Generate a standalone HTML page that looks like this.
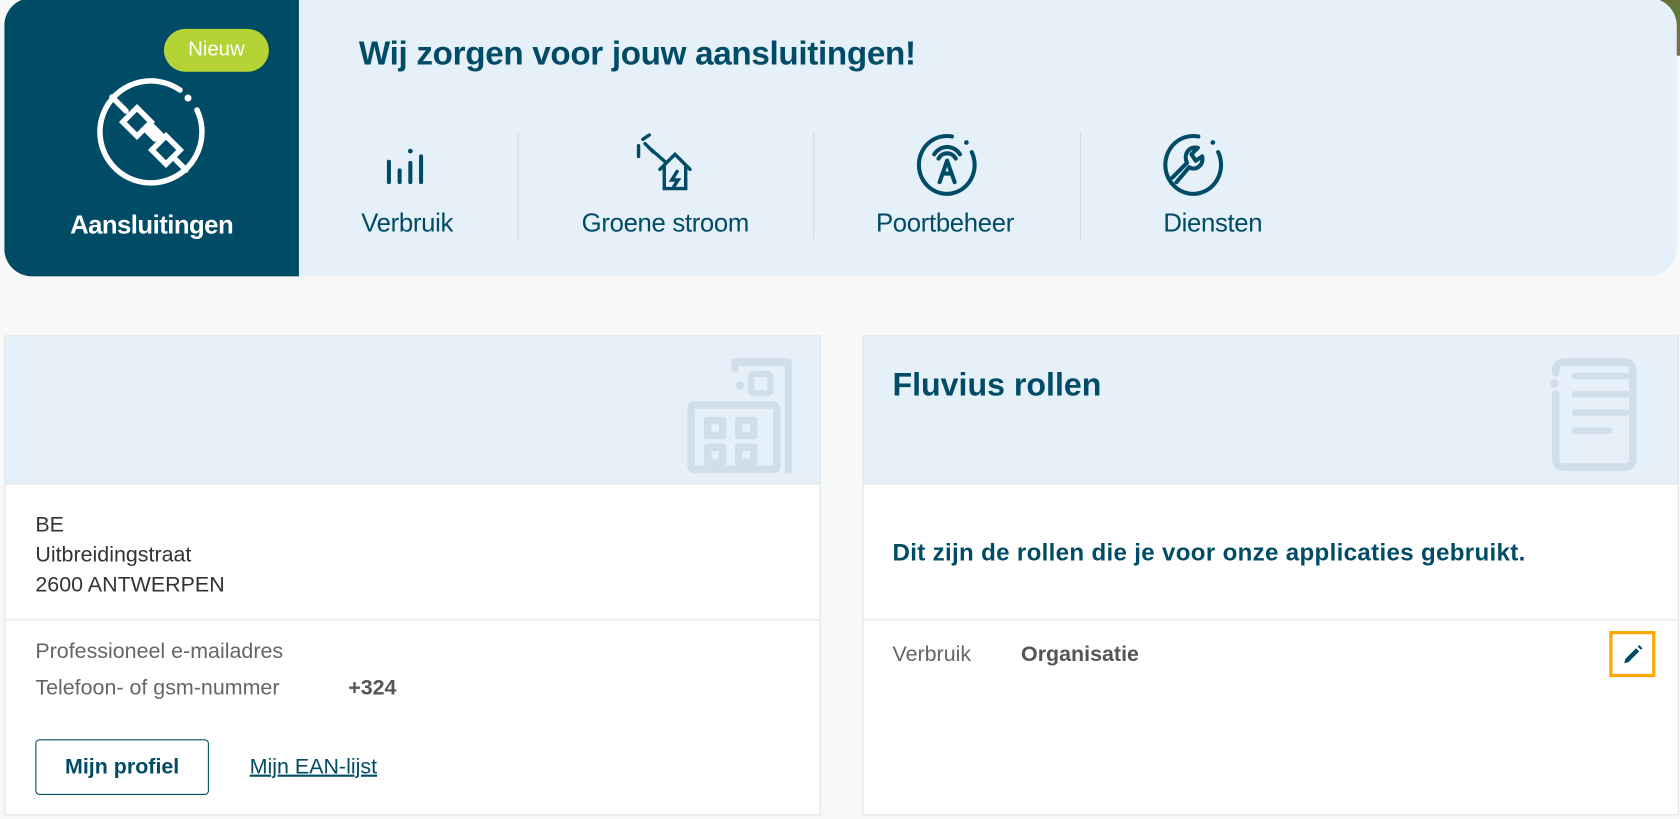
<!DOCTYPE html>
<html><head><meta charset="utf-8"><style>
*{box-sizing:border-box;margin:0;padding:0}
body{width:1680px;height:818px;background:#f7f9f9;font-family:"Liberation Sans",sans-serif;position:relative;overflow:hidden}
#w{position:absolute;left:0;top:0;width:1568px;height:764px;transform:scale(1.0714);transform-origin:0 0}
.abs{position:absolute}
.banner{left:4px;top:-2px;width:1561px;height:260px;background:#e6f0f9;border-radius:26px;overflow:hidden}
.dark{left:0;top:0;width:275px;height:260px;background:#004b66}
.navl{position:absolute;font-size:24px;color:#004b66;text-align:center;width:220px;top:197px;letter-spacing:-0.3px}
.div{position:absolute;top:126px;width:1px;height:99px;background:#cfd8de}
.card{background:#fff;border:1px solid #dde3e7}
.chead{position:absolute;left:0;top:0;right:0;height:138px;background:#e6f0f9;border-bottom:1px solid #dde3e7}
.t{position:absolute;white-space:nowrap}
</style></head><body>
<div id="w">
<div class="abs" style="left:1530px;top:0;width:40px;height:52px;background:linear-gradient(135deg,#7a5a3a,#5d7a3a 50%,#8a6a4a)"></div>
<div class="abs banner">
  <div class="abs dark">
    <div class="abs" style="left:149px;top:29px;width:98px;height:40px;border-radius:20px;background:#b5d334;color:#fff;font-size:19px;text-align:center;line-height:40px">Nieuw</div>
    <div class="t" style="left:0;width:275px;text-align:center;top:199px;color:#fff;font-size:24px;font-weight:bold;letter-spacing:-0.5px">Aansluitingen</div>
  </div>
  <div class="t" style="left:331px;top:34px;font-size:31px;font-weight:bold;color:#004b66;letter-spacing:-0.3px">Wij zorgen voor jouw aansluitingen!</div>
  <svg class="abs" style="left:355px;top:128px" width="45" height="50" stroke="#004b66" stroke-width="3.8" stroke-linecap="round"><path d="M4 25V44M14 33V44M24 26V44M34 20V44"/><circle cx="24" cy="15" r="2.2" fill="#004b66" stroke="none"/></svg>
  <div class="navl" style="left:266px">Verbruik</div>
  <div class="div" style="left:479px"></div>
  <svg class="abs" style="left:588px;top:126px" width="60" height="60" fill="none" stroke="#004b66" stroke-width="3.2" stroke-linecap="round"><path d="M8 6L14 2M4 12L4 22M10 10L18 18M14 14L30 28"/><path d="M24 34L38 20L52 34M28 30V52H48V32"/><path d="M40 36L35 44H41L37 50"/></svg>
  <div class="navl" style="left:507px">Groene stroom</div>
  <div class="div" style="left:755px"></div>
  <svg class="abs" style="left:850px;top:124px" width="62" height="62" fill="none" stroke="#004b66" stroke-width="3.8" stroke-linecap="round"><path d="M34.5 5.4A26 27 0 1 0 53 20"/><circle cx="48" cy="11" r="2.2" fill="#004b66" stroke="none"/><path d="M18 22A14 14 0 0 1 42 22M22 26A9 9 0 0 1 38 26M30 28L23 48M30 28L37 48M26 40H34"/></svg>
  <div class="navl" style="left:768px">Poortbeheer</div>
  <div class="div" style="left:1004px"></div>
  <svg class="abs" style="left:1080px;top:124px" width="62" height="62" fill="none" stroke="#004b66" stroke-width="3.8" stroke-linecap="round" stroke-linejoin="round"><path d="M34.5 5.4A26 27 0 1 0 53 20"/><circle cx="48" cy="11" r="2.2" fill="#004b66" stroke="none"/><path d="M10 44L24 30C20 22 26 14 34 16L28 22L32 28L38 24C40 32 32 38 26 34L14 48"/></svg>
  <div class="navl" style="left:1018px">Diensten</div>
</div>

<div class="abs card" style="left:4px;top:313px;width:762px;height:448px">
  <div class="chead">
    <svg class="abs" style="left:634px;top:20px" width="100" height="108" fill="none" stroke="#cfdeea" stroke-linejoin="round">
      <path d="M50 10V4H100V106" stroke-width="7" stroke-linecap="round" transform="translate(-3,0)"/>
      <circle cx="52" cy="26" r="4" fill="#cfdeea" stroke="none"/>
      <rect x="62" y="15" width="18" height="18" rx="3" stroke-width="6"/>
      <rect x="6" y="44" width="80" height="60" rx="3" stroke-width="7"/>
      <g fill="#cfdeea" stroke="none"><rect x="18" y="55" width="21" height="21" rx="3"/><rect x="47" y="55" width="21" height="21" rx="3"/><rect x="18" y="80" width="21" height="21" rx="3"/><rect x="47" y="80" width="21" height="21" rx="3"/></g>
      <g fill="#e6f0f9" stroke="none"><rect x="25" y="62" width="7" height="7"/><rect x="54" y="62" width="7" height="7"/><rect x="25" y="87" width="7" height="7"/><rect x="54" y="87" width="7" height="7"/></g>
    </svg>
  </div>
  <div class="t" style="left:28px;top:162px;font-size:20px;color:#333;line-height:28px">BE<br>Uitbreidingstraat<br>2600 ANTWERPEN</div>
  <div class="abs" style="left:0;right:0;top:264px;height:1px;background:#dde3e7"></div>
  <div class="t" style="left:28px;top:283px;font-size:20px;color:#666">Professioneel e-mailadres</div>
  <div class="t" style="left:28px;top:317px;font-size:20px;color:#666">Telefoon- of gsm-nummer</div>
  <div class="t" style="left:320px;top:317px;font-size:20px;color:#555;font-weight:bold">+324</div>
  <div class="abs" style="left:28px;top:376px;width:162px;height:52px;border:1px solid #004b66;border-radius:4px;text-align:center;line-height:50px;font-size:20px;font-weight:bold;color:#004b66">Mijn profiel</div>
  <div class="t" style="left:228px;top:391px;font-size:20px;color:#004b66;text-decoration:underline">Mijn EAN-lijst</div>
</div>

<div class="abs card" style="left:805px;top:313px;width:762px;height:448px">
  <div class="chead">
    <svg class="abs" style="left:632px;top:20px" width="95" height="110" fill="none" stroke="#cfdeea" stroke-width="7" stroke-linecap="round">
      <path d="M14 34V94Q14 102 22 102H78Q86 102 86 94V12Q86 4 78 4H22Q14 4 14 12V14"/>
      <circle cx="13" cy="24" r="4" fill="#cfdeea" stroke="none"/>
      <path d="M32 17H80M32 34H80M32 51H80M32 68H64" stroke-width="6"/>
    </svg>
  </div>
  <div class="t" style="left:27px;top:29px;font-size:30px;font-weight:bold;color:#004b66">Fluvius rollen</div>
  <div class="t" style="left:27px;top:189px;font-size:22.5px;font-weight:bold;color:#004b66;letter-spacing:0.3px">Dit zijn de rollen die je voor onze applicaties gebruikt.</div>
  <div class="abs" style="left:0;right:0;top:264px;height:1px;background:#dde3e7"></div>
  <div class="t" style="left:27px;top:286px;font-size:20px;color:#666">Verbruik</div>
  <div class="t" style="left:147px;top:286px;font-size:20px;color:#555;font-weight:bold">Organisatie</div>
  <div class="abs" style="left:696px;top:275px;width:43px;height:43px;border:3px solid #ffa800;background:#fff">
    <svg class="abs" style="left:10px;top:10px" width="18" height="18" fill="#004b66"><path d="M1 17L2 13L12 3L15 6L5 16Z M13.5 1.5L15 0L18 3L16.5 4.5Z"/></svg>
  </div>
</div>
</div>
<svg class="abs" style="left:0;top:0" width="280" height="260" fill="none" stroke="#fff" stroke-width="5.5" stroke-linecap="round">
  <path d="M180 90A51 51 0 1 0 197 110"/>
  <circle cx="188" cy="98" r="3.5" fill="#fff" stroke="none"/>
  <path d="M112 97L126 111M147 131L155 139M176 160L186 170"/>
  <rect x="127" y="112" width="20" height="20" transform="rotate(45 137 122)"/>
  <rect x="156" y="140" width="20" height="20" transform="rotate(45 166 150)"/>
  <path d="M150 127L160 137" stroke-width="10"/>
</svg>
</body></html>
